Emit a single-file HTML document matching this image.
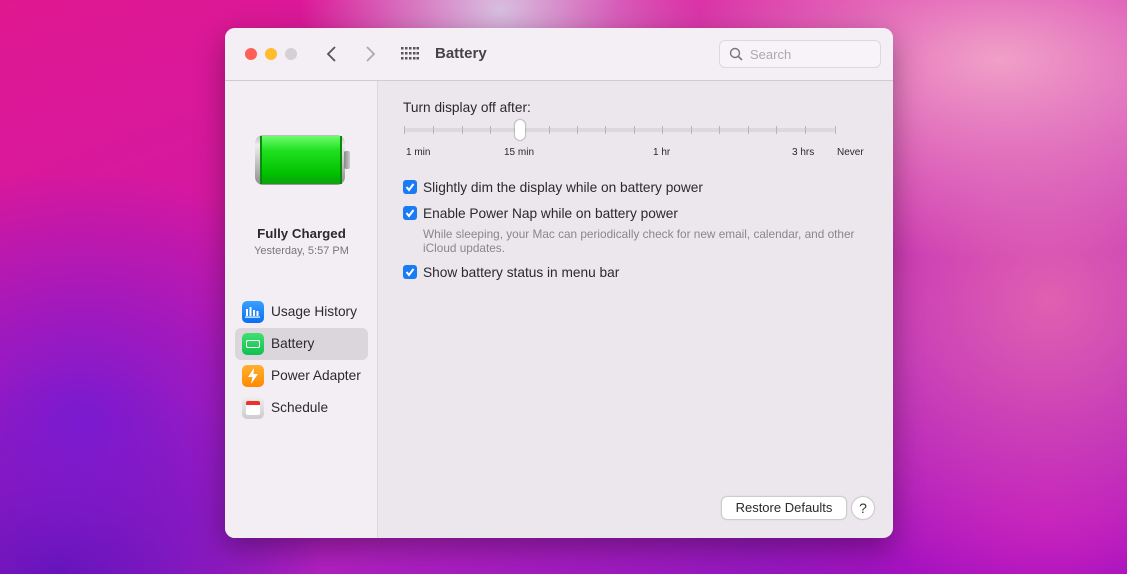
<!DOCTYPE html>
<html><head><style>
*{margin:0;padding:0;box-sizing:border-box}
body{width:1127px;height:574px;overflow:hidden;font-family:"Liberation Sans",sans-serif;position:relative;
background:
radial-gradient(ellipse 300px 250px at 80px 420px,#7a1ad0 0%,rgba(122,26,208,0) 100%),
radial-gradient(ellipse 260px 200px at 60px 570px,#5a10b0 0%,rgba(90,16,176,0) 100%),
radial-gradient(ellipse 400px 200px at 1000px 60px,#f0a0c8 0%,rgba(240,160,200,0) 100%),
radial-gradient(ellipse 300px 300px at 1050px 300px,#e060b0 0%,rgba(224,96,176,0) 100%),
radial-gradient(ellipse 300px 200px at 1050px 520px,#c010c0 0%,rgba(192,16,192,0) 100%),
radial-gradient(ellipse 200px 150px at 500px 10px,#d8c0e0 0%,rgba(216,192,224,0) 100%),
linear-gradient(160deg,#e01890 0%,#d018a8 40%,#b020c0 70%,#8010c0 100%);}
.win{position:absolute;left:225px;top:28px;width:668px;height:510px;border-radius:10px;overflow:hidden;background:#ebe7ec;box-shadow:0 10px 30px rgba(0,0,0,.35)}
.tb{position:absolute;left:0;top:0;width:668px;height:53px;background:#f4eff5;border-bottom:1px solid #d0cbd1}
.side{position:absolute;left:0;top:53px;width:153px;height:457px;background:#f3eef4;border-right:1px solid #dcd6dd}
.dot{position:absolute;top:20px;width:12px;height:12px;border-radius:50%}
.t{position:absolute;white-space:nowrap;color:#2a2a2a}
.cb{position:absolute;width:14px;height:14px;border-radius:3px;background:#1a7cf5}
.tick{position:absolute;top:98px;width:1px;height:8px;background:#b8b4b9}
.ico{position:absolute;left:17px;width:22px;height:22px;border-radius:5px}
.l{font-size:13.7px}
</style></head><body>
<div class="win">
<div class="tb">
<div class="dot" style="left:20px;background:#fe5f57"></div>
<div class="dot" style="left:40px;background:#febc2e"></div>
<div class="dot" style="left:60px;background:#d5d0d5"></div>
<svg style="position:absolute;left:100px;top:17px" width="14" height="18"><path d="M10 2 L3 9 L10 16" stroke="#555" stroke-width="1.8" fill="none"/></svg>
<svg style="position:absolute;left:138px;top:17px" width="14" height="18"><path d="M4 2 L11 9 L4 16" stroke="#aaa" stroke-width="1.8" fill="none"/></svg>
<svg style="position:absolute;left:176px;top:19px" width="18" height="14" fill="#555">
<g><rect x="0" y="0" width="2.5" height="2.5"/><rect x="4" y="0" width="2.5" height="2.5"/><rect x="8" y="0" width="2.5" height="2.5"/><rect x="12" y="0" width="2.5" height="2.5"/><rect x="15.5" y="0" width="2.5" height="2.5"/>
<rect x="0" y="5" width="2.5" height="2.5"/><rect x="4" y="5" width="2.5" height="2.5"/><rect x="8" y="5" width="2.5" height="2.5"/><rect x="12" y="5" width="2.5" height="2.5"/><rect x="15.5" y="5" width="2.5" height="2.5"/>
<rect x="0" y="10" width="2.5" height="2.5"/><rect x="4" y="10" width="2.5" height="2.5"/><rect x="8" y="10" width="2.5" height="2.5"/><rect x="12" y="10" width="2.5" height="2.5"/><rect x="15.5" y="10" width="2.5" height="2.5"/></g></svg>
<div class="t" style="left:210px;top:17px;font-size:15px;font-weight:bold;color:#444">Battery</div>
<div style="position:absolute;left:494px;top:12px;width:162px;height:28px;border:1px solid #ddd8de;border-radius:6px;background:#f7f3f8"></div>
<svg style="position:absolute;left:504px;top:19px" width="14" height="14"><circle cx="6" cy="6" r="4.5" stroke="#777" stroke-width="1.4" fill="none"/><path d="M9.3 9.3 L13 13" stroke="#777" stroke-width="1.6"/></svg>
<div class="t" style="left:525px;top:19px;font-size:13px;color:#aaa">Search</div>
</div>
<div class="side">
<div style="position:absolute;left:30px;top:54px;width:90px;height:50px;border-radius:8px;background:linear-gradient(#bbb,#eee 20%,#999 90%)"></div>
<div style="position:absolute;left:35px;top:55px;width:82px;height:48px;background:linear-gradient(#6efc6e,#20e020 30%,#00c000 80%,#10a010);border-left:2px solid #0a8a0a;border-right:2px solid #0a8a0a"></div>
<div style="position:absolute;left:119px;top:70px;width:6px;height:18px;border-radius:2px;background:linear-gradient(90deg,#888,#ccc)"></div>
<div class="t" style="left:0;width:153px;text-align:center;top:145px;font-size:13.3px;font-weight:bold">Fully Charged</div>
<div class="t" style="left:0;width:153px;text-align:center;top:164px;font-size:11px;color:#777">Yesterday, 5:57 PM</div>
<div style="position:absolute;left:10px;top:247px;width:133px;height:32px;border-radius:6px;background:#dbd6dc"></div>
<div class="ico" style="background:linear-gradient(#3aa0ff,#0a6ef0);top:220px"></div>
<svg style="position:absolute;left:20px;top:225px" width="16" height="12" fill="#fff"><rect x="1" y="3" width="2" height="7"/><rect x="4.5" y="1" width="2" height="9"/><rect x="8" y="4" width="2" height="6"/><rect x="11.5" y="5" width="2" height="5"/><rect x="0" y="10.5" width="15" height="1.2"/></svg>
<div class="t l" style="left:46px;top:223px">Usage History</div>
<div class="ico" style="top:252px;background:linear-gradient(#40e070,#10c050)"></div>
<div style="position:absolute;left:21px;top:259px;width:14px;height:8px;border:1.5px solid #fff;border-radius:2px"></div>
<div class="t l" style="left:46px;top:255px">Battery</div>
<div class="ico" style="top:284px;background:linear-gradient(#ffb030,#ff8a00)"></div>
<svg style="position:absolute;left:22px;top:287px" width="12" height="16"><path d="M7 0 L1 9 L5.5 9 L4 16 L11 6 L6.5 6 Z" fill="#fff"/></svg>
<div class="t l" style="left:46px;top:287px">Power Adapter</div>
<div class="ico" style="top:316px;background:linear-gradient(#eee,#ccc)"></div>
<div style="position:absolute;left:21px;top:320px;width:14px;height:14px;border-radius:2px;background:#fff;border-top:4px solid #f0302a"></div>
<div class="t l" style="left:46px;top:319px">Schedule</div>
</div>
<div class="t l" style="left:178px;top:72px">Turn display off after:</div>
<div style="position:absolute;left:179px;top:100px;width:431px;height:4px;border-radius:2px;background:#dcd8dd"></div>
<div class="tick" style="left:179px"></div><div class="tick" style="left:208px"></div><div class="tick" style="left:237px"></div><div class="tick" style="left:265px"></div>
<div class="tick" style="left:324px"></div><div class="tick" style="left:352px"></div><div class="tick" style="left:380px"></div><div class="tick" style="left:409px"></div><div class="tick" style="left:437px"></div><div class="tick" style="left:466px"></div><div class="tick" style="left:494px"></div><div class="tick" style="left:523px"></div><div class="tick" style="left:551px"></div><div class="tick" style="left:580px"></div><div class="tick" style="left:610px"></div>
<div style="position:absolute;left:290px;top:92px;width:10px;height:20px;border-radius:5px;background:#fff;box-shadow:0 0 1px 1px rgba(0,0,0,.2)"></div>
<div class="t" style="left:181px;top:119px;font-size:10px">1 min</div>
<div class="t" style="left:279px;top:119px;font-size:10px">15 min</div>
<div class="t" style="left:428px;top:119px;font-size:10px">1 hr</div>
<div class="t" style="left:567px;top:119px;font-size:10px">3 hrs</div>
<div class="t" style="left:612px;top:119px;font-size:10px">Never</div>
<div class="cb" style="left:178px;top:152px"></div><div class="t l" style="left:198px;top:152px">Slightly dim the display while on battery power</div>
<div class="cb" style="left:178px;top:178px"></div><div class="t l" style="left:198px;top:178px">Enable Power Nap while on battery power</div>
<div class="t" style="left:198px;top:199px;font-size:11.8px;color:#888;line-height:14px">While sleeping, your Mac can periodically check for new email, calendar, and other<br>iCloud updates.</div>
<div class="cb" style="left:178px;top:237px"></div><div class="t l" style="left:198px;top:237px">Show battery status in menu bar</div>
<svg style="position:absolute;left:178px;top:152px" width="14" height="100"><g stroke="#fff" stroke-width="2" fill="none"><path d="M3.5 7 L6 10 L10.5 4"/><path d="M3.5 33 L6 36 L10.5 30"/><path d="M3.5 92 L6 95 L10.5 89"/></g></svg>
<div style="position:absolute;left:497px;top:469px;width:124px;height:22px;border-radius:5px;background:#fff;box-shadow:0 0 1px 1px rgba(0,0,0,.15)"></div>
<div class="t" style="left:497px;width:124px;text-align:center;top:472px;font-size:13px">Restore Defaults</div>
<div style="position:absolute;left:627px;top:469px;width:22px;height:22px;border-radius:50%;background:#fff;box-shadow:0 0 1px 1px rgba(0,0,0,.15);text-align:center;font-size:14px;line-height:22px;color:#333">?</div>
</div>
</body></html>
